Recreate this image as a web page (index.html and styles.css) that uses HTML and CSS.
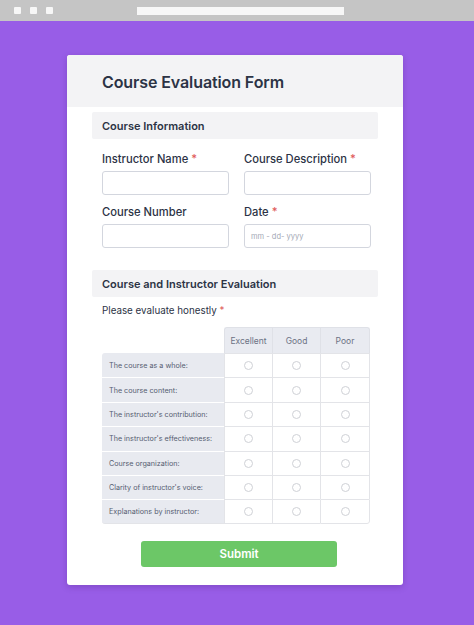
FILE: index.html
```html
<!DOCTYPE html>
<html lang="en">
<head>
<meta charset="utf-8">
<title>Course Evaluation Form</title>
<link rel="stylesheet" href="styles.css">
</head>
<body>
<div class="topbar">
  <div class="dots"><span class="dot"></span><span class="dot"></span><span class="dot"></span></div>
  <div class="url"></div>
</div>
<div class="stage">
  <div class="card">
    <div class="card-head"><h1 class="title">Course Evaluation Form</h1></div>
    <div class="section-bar">Course Information</div>
    <div class="fields">
      <div class="field">
        <label class="label">Instructor Name <span class="req">*</span></label>
        <div class="input"></div>
      </div>
      <div class="field">
        <label class="label">Course Description <span class="req">*</span></label>
        <div class="input"></div>
      </div>
      <div class="field">
        <label class="label">Course Number</label>
        <div class="input"></div>
      </div>
      <div class="field">
        <label class="label">Date <span class="req">*</span></label>
        <div class="input"><span class="placeholder">mm - dd- yyyy</span></div>
      </div>
    </div>
    <div class="section-bar section-two">Course and Instructor Evaluation</div>
    <div class="question">Please evaluate honestly <span class="req">*</span></div>
    <div class="matrix">
      <div class="corner"></div>
      <div class="colhead">Excellent</div>
      <div class="colhead">Good</div>
      <div class="colhead last">Poor</div>

      <div class="rowhead">The course as a whole:</div>
      <div class="cell"><span class="radio"></span></div>
      <div class="cell"><span class="radio"></span></div>
      <div class="cell last"><span class="radio"></span></div>

      <div class="rowhead">The course content:</div>
      <div class="cell"><span class="radio"></span></div>
      <div class="cell"><span class="radio"></span></div>
      <div class="cell last"><span class="radio"></span></div>

      <div class="rowhead">The instructor's contribution:</div>
      <div class="cell"><span class="radio"></span></div>
      <div class="cell"><span class="radio"></span></div>
      <div class="cell last"><span class="radio"></span></div>

      <div class="rowhead">The instructor's effectiveness:</div>
      <div class="cell"><span class="radio"></span></div>
      <div class="cell"><span class="radio"></span></div>
      <div class="cell last"><span class="radio"></span></div>

      <div class="rowhead">Course organization:</div>
      <div class="cell"><span class="radio"></span></div>
      <div class="cell"><span class="radio"></span></div>
      <div class="cell last"><span class="radio"></span></div>

      <div class="rowhead">Clarity of instructor's voice:</div>
      <div class="cell"><span class="radio"></span></div>
      <div class="cell"><span class="radio"></span></div>
      <div class="cell last"><span class="radio"></span></div>

      <div class="rowhead bottom-left">Explanations by instructor:</div>
      <div class="cell"><span class="radio"></span></div>
      <div class="cell"><span class="radio"></span></div>
      <div class="cell last bottom-right"><span class="radio"></span></div>
    </div>
    <div class="actions"><button class="submit" type="button">Submit</button></div>
  </div>
</div>
</body>
</html>
```
FILE: styles.css
```css
* { box-sizing: border-box; }
html, body {
  margin: 0;
  padding: 0;
  height: 100%;
}
body {
  font-family: Inter, "Noto Sans", sans-serif;
  color: #2c3345;
  background: #985de7;
  overflow: hidden;
}
.topbar {
  height: 21px;
  background: #c5c5c5;
  display: flex;
  align-items: center;
  padding-left: 14px;
}
.dots {
  display: flex;
  gap: 9px;
}
.dot {
  width: 7px;
  height: 7px;
  background: #f7f7f7;
  border-radius: 1px;
}
.url {
  width: 207px;
  height: 8px;
  background: #f7f7f7;
  margin-left: 84px;
}
.stage {
  background: #985de7;
  padding-top: 34px;
  padding-left: 67px;
  height: 604px;
}
.card {
  width: 336px;
  background: #ffffff;
  border-radius: 3px;
  box-shadow: 0 2px 6px rgba(60, 20, 110, 0.25);
  padding-bottom: 18px;
  overflow: hidden;
}
.card-head {
  height: 52px;
  background: #f3f3f5;
  display: flex;
  align-items: center;
  padding-left: 35px;
}
.title {
  margin: 0;
  font-size: 16px;
  font-weight: 600;
  letter-spacing: -0.1px;
  color: #2c3345;
  padding-top: 2px;
}
.section-bar {
  margin: 5px 25px 0 25px;
  height: 27px;
  background: #f3f3f5;
  border-radius: 2px;
  display: flex;
  align-items: center;
  padding-left: 10px;
  font-size: 11px;
  font-weight: 600;
  color: #2c3345;
}
.section-two {
  margin-top: 22px;
}
.fields {
  display: grid;
  grid-template-columns: 127px 127px;
  column-gap: 15px;
  row-gap: 9px;
  padding-left: 35px;
  margin-top: 12px;
}
.label {
  display: block;
  height: 16px;
  line-height: 16px;
  font-size: 11.2px;
  font-weight: 500;
  color: #2c3345;
  margin-bottom: 4px;
}
.req {
  color: #e05a5a;
}
.input {
  height: 24px;
  border: 1px solid #d3d6de;
  border-radius: 3px;
  background: #fff;
  display: flex;
  align-items: center;
  padding-left: 6px;
}
.placeholder {
  font-size: 7.5px;
  color: #a3a8b5;
}
.question {
  margin: 6px 0 0 35px;
  height: 16px;
  line-height: 16px;
  font-size: 9.8px;
  font-weight: 400;
  color: #2c3345;
}
.matrix {
  margin: 8px 0 0 35px;
  width: 268px;
  display: grid;
  grid-template-columns: 122px 48px 48px 50px;
  grid-template-rows: 26px repeat(7, 24.4px);
}
.corner {
  background: #fff;
}
.colhead {
  background: #e9ebf1;
  border-top: 1px solid #dfe1e7;
  border-left: 1px solid #dfe1e7;
  display: flex;
  align-items: center;
  justify-content: center;
  font-size: 8.5px;
  color: #6b7284;
}
.colhead:nth-child(2) {
  border-top-left-radius: 3px;
}
.colhead.last {
  border-right: 1px solid #dfe1e7;
  border-top-right-radius: 3px;
}
.rowhead {
  background: #e8eaf0;
  border-top: 1px solid #ffffff;
  display: flex;
  align-items: center;
  padding-left: 7px;
  font-size: 7.2px;
  color: #565d70;
  white-space: nowrap;
}
.rowhead:nth-child(5) {
  border-top-left-radius: 3px;
  border-top: none;
}
.cell {
  border-top: 1px solid #e3e4e8;
  border-left: 1px solid #e3e4e8;
  display: flex;
  align-items: center;
  justify-content: center;
  background: #fff;
}
.cell.last {
  border-right: 1px solid #e3e4e8;
}
.matrix > :nth-last-child(-n+4) {
  border-bottom: 1px solid #e3e4e8;
}
.bottom-left {
  border-bottom-left-radius: 3px;
}
.bottom-right {
  border-bottom-right-radius: 3px;
}
.radio {
  width: 9px;
  height: 9px;
  border: 1px solid #cfd1d6;
  border-radius: 50%;
  background: #fff;
}
.actions {
  margin-top: 17px;
  padding-left: 74px;
}
.submit {
  width: 196px;
  height: 26px;
  background: #6cc767;
  border: none;
  border-radius: 3px;
  color: #ffffff;
  font-family: Inter, "Noto Sans", sans-serif;
  font-size: 11.5px;
  font-weight: 600;
  padding: 0;
}
```
